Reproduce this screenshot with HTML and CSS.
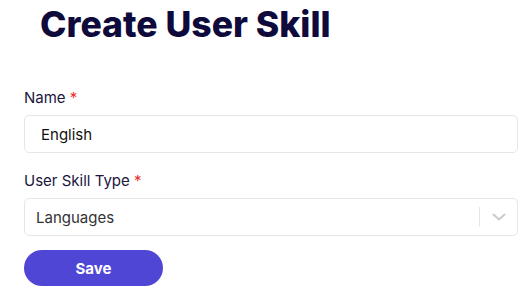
FILE: index.html
```html
<!DOCTYPE html>
<html lang="en">
<head>
  <meta charset="UTF-8">
  <meta name="viewport" content="width=device-width, initial-scale=1.0">
  <title>Create User Skill</title>
  <link rel="stylesheet" href="styles.css">
</head>
<body>
  <div class="page">
    <h1 class="title">Create User Skill</h1>
    <form class="form">
      <div class="field">
        <label class="label" for="name">Name <span class="req">*</span></label>
        <input class="input" type="text" id="name" value="English">
      </div>
      <div class="field">
        <label class="label">User Skill Type <span class="req">*</span></label>
        <div class="select">
          <span class="select-value">Languages</span>
          <span class="select-sep"></span>
          <svg class="select-arrow" width="20" height="20" viewBox="0 0 20 20">
            <path d="M4.5 7.5 L10 12.5 L15.5 7.5" fill="none" stroke="#cccccc" stroke-width="2" stroke-linecap="round" stroke-linejoin="round"/>
          </svg>
        </div>
      </div>
      <button class="save" type="button">Save</button>
    </form>
  </div>
</body>
</html>
```

FILE: styles.css
```css
* {
  box-sizing: border-box;
  margin: 0;
  padding: 0;
}

body {
  font-family: 'Inter', 'Noto Sans', sans-serif;
  background-color: #ffffff;
}

.page {
  padding: 3px 11px 0 24px;
}

.title {
  font-size: 35.6px;
  font-weight: 800;
  color: #0e0a3b;
  padding-left: 16px;
  line-height: 44px;
}

.form {
  margin-top: 42px;
  display: flex;
  flex-direction: column;
}

.field {
  display: flex;
  flex-direction: column;
  gap: 8px;
  margin-bottom: 19px;
}

.label {
  font-size: 15px;
  color: #1a1640;
  line-height: 18px;
}

.req {
  color: #ef2b2b;
}

.input {
  height: 38px;
  width: 100%;
  border: 1px solid #e6e6e6;
  border-radius: 5px;
  padding: 0 16px;
  font-family: inherit;
  font-size: 15px;
  color: #111111;
  outline: none;
}

.select {
  height: 38px;
  border: 1px solid #e6e6e6;
  border-radius: 5px;
  display: flex;
  align-items: center;
  padding-left: 11px;
}

.select-value {
  flex: 1;
  font-size: 15px;
  color: #333333;
}

.select-sep {
  width: 1px;
  height: 20px;
  background-color: #e6e6e6;
}

.select-arrow {
  margin: 0 8px 0 9px;
}

.save {
  width: 139px;
  height: 36px;
  border: none;
  border-radius: 18px;
  background-color: #5046d6;
  color: #ffffff;
  font-family: inherit;
  font-size: 15px;
  font-weight: 700;
  margin-top: -5px;
  cursor: pointer;
}
```
